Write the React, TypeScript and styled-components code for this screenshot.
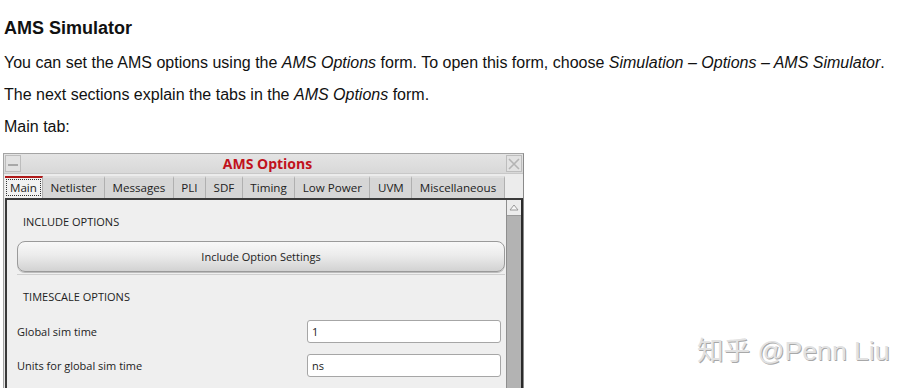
import styled, { createGlobalStyle } from 'styled-components'

const GlobalStyle = createGlobalStyle`
  html, body {
    margin: 0;
    padding: 0;
    background: #ffffff;
    overflow: hidden;
  }
  body {
    font-family: 'Liberation Sans', Arial, sans-serif;
    color: #111111;
  }
`

const Page = styled.div`
  position: relative;
  width: 915px;
  height: 388px;
  overflow: hidden;
`

const Heading = styled.h3`
  margin: 17px 0 0 4px;
  font-size: 18px;
  line-height: 22px;
  font-weight: 700;
`

const Para = styled.p`
  margin: 12px 0 0 4px;
  font-size: 16px;
  line-height: 20px;
  &:first-of-type {
    margin-top: 14px;
  }
`

const Window = styled.div`
  margin: 16px 0 0 3px;
  width: 519px;
  height: 260px;
  border: 1px solid #a4a4a4;
  border-right-color: #8a8a8a;
  background: #e6e6e6;
  font-family: 'Open Sans', 'DejaVu Sans', sans-serif;
  color: #222222;
  display: flex;
  flex-direction: column;
`

const TitleBar = styled.div`
  display: flex;
  align-items: center;
  height: 19px;
  padding: 0 1px;
  background: linear-gradient(#e4e4e4, #d8d8d8);
  border-bottom: 1px solid #c8c8c8;
`

const WinButton = styled.div`
  width: 16px;
  height: 17px;
  box-sizing: border-box;
  border: 1px solid #bdbdbd;
  background: #e2e2e2;
  display: flex;
  align-items: center;
  justify-content: center;
`

const MinLine = styled.span`
  display: block;
  width: 10px;
  height: 2px;
  margin-top: 3px;
  background: #a8a8a8;
`

const Title = styled.div`
  flex: 1;
  text-align: center;
  color: #c1121c;
  font-weight: 700;
  font-size: 14px;
  line-height: 19px;
  padding-left: 8px;
`

const TabRow = styled.div`
  display: flex;
  height: 22px;
  padding: 2px 0 0 1px;
  background: #ececec;
`

const Tab = styled.div<{ $active?: boolean }>`
  box-sizing: border-box;
  height: 22px;
  padding: ${({ $active }) => ($active ? '0 2px' : '0 7.5px')};
  font-size: 11.6px;
  line-height: 20px;
  background: ${({ $active }) => ($active ? '#f2f2f2' : '#d6d6d6')};
  border-top: 2px solid ${({ $active }) => ($active ? '#b01a1a' : '#dedede')};
  border-right: 1px solid #b0b0b0;
  color: #222222;
  white-space: nowrap;
`

const Focus = styled.span`
  outline: 1px dotted #333333;
  outline-offset: 0;
  padding: 0 3px;
`

const Panel = styled.div`
  flex: 1;
  display: flex;
  margin-left: 1px;
  border-top: 2px solid #3a3a3a;
  border-left: 2px solid #3a3a3a;
  border-right: 2px solid #2a2a2a;
  background: #efefef;
`

const PanelBody = styled.div`
  flex: 1;
  padding: 0 0 0 10px;
`

const SectionLabel = styled.div<{ $gap?: number }>`
  font-size: 11px;
  line-height: 14px;
  padding-left: 6px;
  margin-top: ${({ $gap }) => $gap ?? 15}px;
`

const BigButton = styled.div`
  margin-top: 12px;
  height: 31px;
  box-sizing: border-box;
  border: 1px solid #9a9a9a;
  border-radius: 8px;
  background: linear-gradient(#f8f8f8 0%, #ececec 45%, #d2d2d2 100%);
  box-shadow: 0 1px 0 #bdbdbd;
  font-size: 11px;
  line-height: 29px;
  text-align: center;
  color: #222222;
`

const Rule = styled.div`
  margin-top: 2px;
  height: 1px;
  background: #cfcfcf;
`

const FieldRow = styled.div<{ $gap?: number }>`
  display: flex;
  align-items: center;
  justify-content: space-between;
  margin-top: ${({ $gap }) => $gap ?? 11}px;
  padding-right: 4px;
`

const FieldLabel = styled.span`
  font-size: 11px;
`

const Input = styled.div`
  width: 194px;
  height: 23px;
  box-sizing: border-box;
  border: 1px solid #a6a6a6;
  border-radius: 3px;
  background: #ffffff;
  font-size: 11px;
  line-height: 21px;
  padding-left: 4px;
`

const ScrollBar = styled.div`
  width: 14px;
  margin-left: 1px;
  background: #b3b3b3;
  border-left: 1px solid #8e8e8e;
  display: flex;
  flex-direction: column;
`

const ScrollArrow = styled.div`
  height: 15px;
  background: #ececec;
  border-bottom: 1px solid #9a9a9a;
  display: flex;
  align-items: center;
  justify-content: center;
`

const Watermark = styled.div`
  position: absolute;
  left: 697px;
  top: 334px;
  font-family: 'Liberation Sans', 'Noto Sans CJK SC', sans-serif;
  font-size: 26.6px;
  line-height: 34px;
  color: #e2e2e2;
  text-shadow: 1px 1px 0 #a8a8a8;
  white-space: nowrap;
`

const tabs = ['Main', 'Netlister', 'Messages', 'PLI', 'SDF', 'Timing', 'Low Power', 'UVM', 'Miscellaneous']

export default function App() {
  return (
    <Page>
      <GlobalStyle />
      <Heading>AMS Simulator</Heading>
      <Para>
        You can set the AMS options using the <i>AMS Options</i> form. To open this form, choose{' '}
        <i>Simulation – Options – AMS Simulator</i>.
      </Para>
      <Para>
        The next sections explain the tabs in the <i>AMS Options</i> form.
      </Para>
      <Para>Main tab:</Para>

      <Window>
        <TitleBar>
          <WinButton>
            <MinLine />
          </WinButton>
          <Title>AMS Options</Title>
          <WinButton>
            <svg width="12" height="12" viewBox="0 0 12 12">
              <path d="M1 1 L11 11 M11 1 L1 11" stroke="#b4b4b4" strokeWidth="1.6" fill="none" />
            </svg>
          </WinButton>
        </TitleBar>
        <TabRow>
          {tabs.map((t, i) => (
            <Tab key={t} $active={i === 0}>
              {i === 0 ? <Focus>{t}</Focus> : t}
            </Tab>
          ))}
        </TabRow>
        <Panel>
          <PanelBody>
            <SectionLabel>INCLUDE OPTIONS</SectionLabel>
            <BigButton>Include Option Settings</BigButton>
            <Rule />
            <SectionLabel $gap={15}>TIMESCALE OPTIONS</SectionLabel>
            <FieldRow $gap={16}>
              <FieldLabel>Global sim time</FieldLabel>
              <Input>1</Input>
            </FieldRow>
            <FieldRow>
              <FieldLabel>Units for global sim time</FieldLabel>
              <Input>ns</Input>
            </FieldRow>
          </PanelBody>
          <ScrollBar>
            <ScrollArrow>
              <svg width="10" height="7" viewBox="0 0 10 7">
                <path d="M1 6 L5 1 L9 6 Z" fill="#f8f8f8" stroke="#9a9a9a" strokeWidth="1" />
              </svg>
            </ScrollArrow>
          </ScrollBar>
        </Panel>
      </Window>

      <Watermark>知乎 @Penn Liu</Watermark>
    </Page>
  )
}
